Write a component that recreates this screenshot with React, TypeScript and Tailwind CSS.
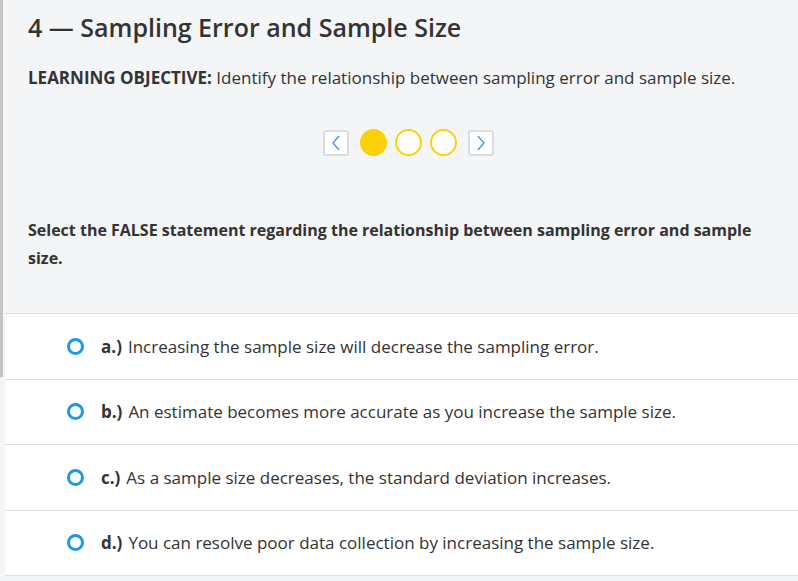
import React from 'react';

const options = [
    { key: 'a', text: 'Increasing the sample size will decrease the sampling error.' },
    { key: 'b', text: 'An estimate becomes more accurate as you increase the sample size.' },
    { key: 'c', text: 'As a sample size decreases, the standard deviation increases.' },
    { key: 'd', text: 'You can resolve poor data collection by increasing the sample size.' },
];

const Chevron: React.FC<{ dir: 'left' | 'right' }> = ({ dir }) => (
    <svg width="10" height="16" viewBox="0 0 10 16" fill="none">
        <path d={dir === 'left' ? 'M8 1 L2 8 L8 15' : 'M2 1 L8 8 L2 15'} stroke="#3b8fe8" strokeWidth="1.2" />
    </svg>
);

const App: React.FC = () => {
    return (
        <div className="w-[798px] h-[581px] bg-[#f4f5f7] flex overflow-hidden text-[#2d2d2d]" style={{ fontFamily: '"Open Sans", "Liberation Sans", sans-serif' }}>
            <div className="w-[3px] h-[377px] bg-[#c4c4c4] shrink-0" />
            <div className="flex-1 flex flex-col pl-[2px]">
                <div className="pl-[23px] pr-[20px]">
                    <h1 className="mt-[10px] text-[25px] leading-[34px] font-semibold text-[#333]">4 — Sampling Error and Sample Size</h1>
                    <p className="mt-[22px] text-[17px] leading-[24px] text-[#333]">
                        <span className="font-bold">LEARNING OBJECTIVE:</span> Identify the relationship between sampling error and sample size.
                    </p>
                    <div className="mt-[39px] flex items-center justify-center gap-[8px] pl-[10px]">
                        <button className="w-[26px] h-[26px] bg-white border-2 border-[#dcdde0] rounded-[3px] flex items-center justify-center mr-[3px]">
                            <Chevron dir="left" />
                        </button>
                        <span className="w-[27px] h-[27px] rounded-full bg-[#fcd10a]" />
                        <span className="w-[27px] h-[27px] rounded-full bg-white border-2 border-[#fcd10a]" />
                        <span className="w-[27px] h-[27px] rounded-full bg-white border-2 border-[#fcd10a]" />
                        <button className="w-[26px] h-[26px] bg-white border-2 border-[#dcdde0] rounded-[3px] flex items-center justify-center ml-[3px]">
                            <Chevron dir="right" />
                        </button>
                    </div>
                    <p className="mt-[60px] text-[16px] leading-[28px] font-bold max-w-[740px] text-[#333]">
                        Select the FALSE statement regarding the relationship between sampling error and sample size.
                    </p>
                </div>
                <div className="mt-[41px] bg-white border-t border-[#dedede]">
                    {options.map(o => (
                        <div key={o.key} className="h-[65.5px] border-b border-[#dedede] flex items-center pl-[62px]">
                            <span className="w-[17px] h-[17px] rounded-full border-[3px] border-[#1d97ee] shrink-0" />
                            <span className="ml-[17px] text-[17px] font-bold text-[#333]">{o.key}.)</span>
                            <span className="ml-[6px] text-[17px] text-[#333]">{o.text}</span>
                        </div>
                    ))}
                </div>
            </div>
        </div>
    );
};

export default App;
